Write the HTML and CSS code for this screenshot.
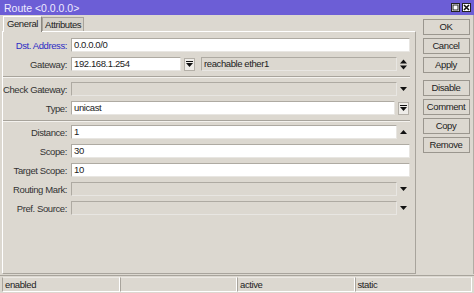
FILE: index.html
```html
<!DOCTYPE html>
<html lang="en">
<head>
	<meta charset="UTF-8" />
	<title>Route &lt;0.0.0.0&gt;</title>
	<link rel="stylesheet" href="styles.css">
</head>
<body>
<div class="window">
	<div class="titlebar">
		<span class="title">Route &lt;0.0.0.0&gt;</span>
		<span class="winbtn">
			<svg width="9" height="9" viewBox="0 0 9 9"><rect x="0.5" y="0.5" width="8" height="8" fill="#fff" stroke="#222"/><rect x="2" y="2" width="5" height="5" fill="none" stroke="#222"/></svg>
		</span>
		<span class="winbtn">
			<svg width="9" height="9" viewBox="0 0 9 9"><rect x="0.5" y="0.5" width="8" height="8" fill="#fff" stroke="#222"/><path d="M2 2L7 7M7 2L2 7" stroke="#111" stroke-width="1.6"/></svg>
		</span>
	</div>

	<div class="main">
		<div class="left">
			<div class="tabs">
				<div class="tab active">General</div>
				<div class="tab">Attributes</div>
			</div>
			<div class="panel">
				<div class="group">
					<div class="row">
						<span class="lbl blue">Dst. Address:</span>
						<span class="field">0.0.0.0/0</span>
					</div>
					<div class="row">
						<span class="lbl">Gateway:</span>
						<span class="field gw">192.168.1.254</span>
						<span class="boxbtn">
							<svg width="7" height="7" viewBox="0 0 7 7"><path d="M0 0.5H7" stroke="#111"/><path d="M0 2H7L3.5 6Z" fill="#111"/></svg>
						</span>
						<span class="field grey state">reachable ether1</span>
						<span class="icon">
							<svg width="7" height="11" viewBox="0 0 7 11"><path d="M0 4.5H7L3.5 0.5Z M0 6.5H7L3.5 10.5Z" fill="#111"/></svg>
						</span>
					</div>
				</div>
				<div class="group">
					<div class="row">
						<span class="lbl">Check Gateway:</span>
						<span class="field grey"></span>
						<span class="icon">
							<svg width="7" height="4" viewBox="0 0 7 4"><path d="M0 0H7L3.5 4Z" fill="#111"/></svg>
						</span>
					</div>
					<div class="row">
						<span class="lbl">Type:</span>
						<span class="field">unicast</span>
						<span class="boxbtn">
							<svg width="7" height="7" viewBox="0 0 7 7"><path d="M0 0.5H7" stroke="#111"/><path d="M0 2H7L3.5 6Z" fill="#111"/></svg>
						</span>
					</div>
				</div>
				<div class="group">
					<div class="row">
						<span class="lbl">Distance:</span>
						<span class="field">1</span>
						<span class="icon">
							<svg width="7" height="4" viewBox="0 0 7 4"><path d="M0 4H7L3.5 0Z" fill="#111"/></svg>
						</span>
					</div>
					<div class="row">
						<span class="lbl">Scope:</span>
						<span class="field">30</span>
					</div>
					<div class="row">
						<span class="lbl">Target Scope:</span>
						<span class="field">10</span>
					</div>
					<div class="row">
						<span class="lbl">Routing Mark:</span>
						<span class="field grey"></span>
						<span class="icon">
							<svg width="7" height="4" viewBox="0 0 7 4"><path d="M0 0H7L3.5 4Z" fill="#111"/></svg>
						</span>
					</div>
					<div class="row">
						<span class="lbl">Pref. Source:</span>
						<span class="field grey"></span>
						<span class="icon">
							<svg width="7" height="4" viewBox="0 0 7 4"><path d="M0 0H7L3.5 4Z" fill="#111"/></svg>
						</span>
					</div>
				</div>
			</div>
		</div>
		<div class="buttons">
			<div class="btn">OK</div>
			<div class="btn">Cancel</div>
			<div class="btn">Apply</div>
			<div class="btn sep">Disable</div>
			<div class="btn">Comment</div>
			<div class="btn">Copy</div>
			<div class="btn">Remove</div>
		</div>
	</div>

	<div class="statusbar">
		<div class="cell">enabled</div>
		<div class="cell"></div>
		<div class="cell">active</div>
		<div class="cell">static</div>
	</div>
</div>
</body>
</html>
```

FILE: styles.css
```css
* {
	padding: 0;
	margin: 0;
	box-sizing: border-box;
}
body, html {
	width: 100%;
	height: 100%;
	background: #dcd8d0;
}
body {
	font-family: "Liberation Sans", Arial, sans-serif;
	font-size: 9.5px;
	letter-spacing: -0.4px;
	color: #222;
}
.window {
	display: flex;
	flex-direction: column;
	width: 474px;
	height: 293px;
}
.titlebar {
	height: 15px;
	background: #6c5ed6;
	color: #eeeaff;
	display: flex;
	align-items: center;
	padding: 0 3px 0 4px;
	gap: 2px;
}
.title {
	flex: 1;
	font-size: 10.5px;
	letter-spacing: 0;
}
.winbtn {
	display: flex;
}
.main {
	flex: 1;
	display: flex;
}
.left {
	width: 416px;
	padding-left: 2px;
	display: flex;
	flex-direction: column;
}
.tabs {
	height: 16px;
	display: flex;
	align-items: flex-end;
	padding-left: 1px;
}
.tab {
	height: 14px;
	padding: 0 2px;
	border: 1px solid #a8a49c;
	border-bottom: none;
	background: #d6d2ca;
	line-height: 13px;
}
.tab.active {
	height: 16px;
	background: #dcd8d0;
	border-color: #fff #8c8880 #fff #fff;
	margin-bottom: -1px;
	position: relative;
	z-index: 1;
	padding: 0 3px;
}
.panel {
	flex: 1;
	border: 1px solid #a8a49c;
	border-top-color: #fff;
	border-left-color: #fff;
	margin-bottom: 1px;
	padding: 0 5px 0 0;
}
.group {
	padding: 6px 0 0;
	border-bottom: 1px solid #a8a49c;
	box-shadow: 0 1px 0 #f4f2ee;
}
.group:nth-child(2) {
	padding-top: 5px;
}
.group:last-child {
	border-bottom: none;
	box-shadow: none;
	padding-top: 4px;
}
.row {
	display: flex;
	align-items: center;
	height: 14px;
	margin-bottom: 5px;
}
.lbl {
	width: 68px;
	padding-right: 4px;
	text-align: right;
	color: #333;
	white-space: nowrap;
}
.lbl.blue {
	color: #2c2cc4;
}
.field {
	flex: 1;
	height: 14px;
	background: #fff;
	border: 1px solid #aeaaa2;
	border-bottom-color: #e8e6e2;
	border-right-color: #e8e6e2;
	padding-left: 2px;
	line-height: 12px;
	white-space: nowrap;
}
.field.grey {
	background: #dcd8d0;
}
.field.gw {
	flex: none;
	width: 110px;
}
.field.state {
	margin-left: 5px;
}
.boxbtn {
	width: 11px;
	height: 13px;
	margin: 0 1px 0 3px;
	border: 1px solid #b4b0a8;
	background: #eeece8;
	display: flex;
	align-items: center;
	justify-content: center;
}
.icon {
	width: 13px;
	display: flex;
	justify-content: center;
	align-items: center;
}
.buttons {
	flex: 1;
	display: flex;
	flex-direction: column;
	align-items: center;
	padding: 4px 3px 0 6px;
	border-right: 1px solid #b0aca4;
	margin-bottom: 1px;
}
.btn {
	width: 47px;
	height: 16px;
	margin-bottom: 3px;
	border: 1px solid #9a968e;
	text-align: center;
	line-height: 14px;
}
.btn.sep {
	margin-top: 4px;
}
.statusbar {
	height: 18px;
	display: flex;
	padding: 1px 2px;
	border-top: 1px solid #a8a49c;
}
.cell {
	flex: 1;
	border: 1px solid #fff;
	border-left-color: #a8a49c;
	border-top-color: #ece9e4;
	padding-left: 2px;
	line-height: 14px;
}
```
